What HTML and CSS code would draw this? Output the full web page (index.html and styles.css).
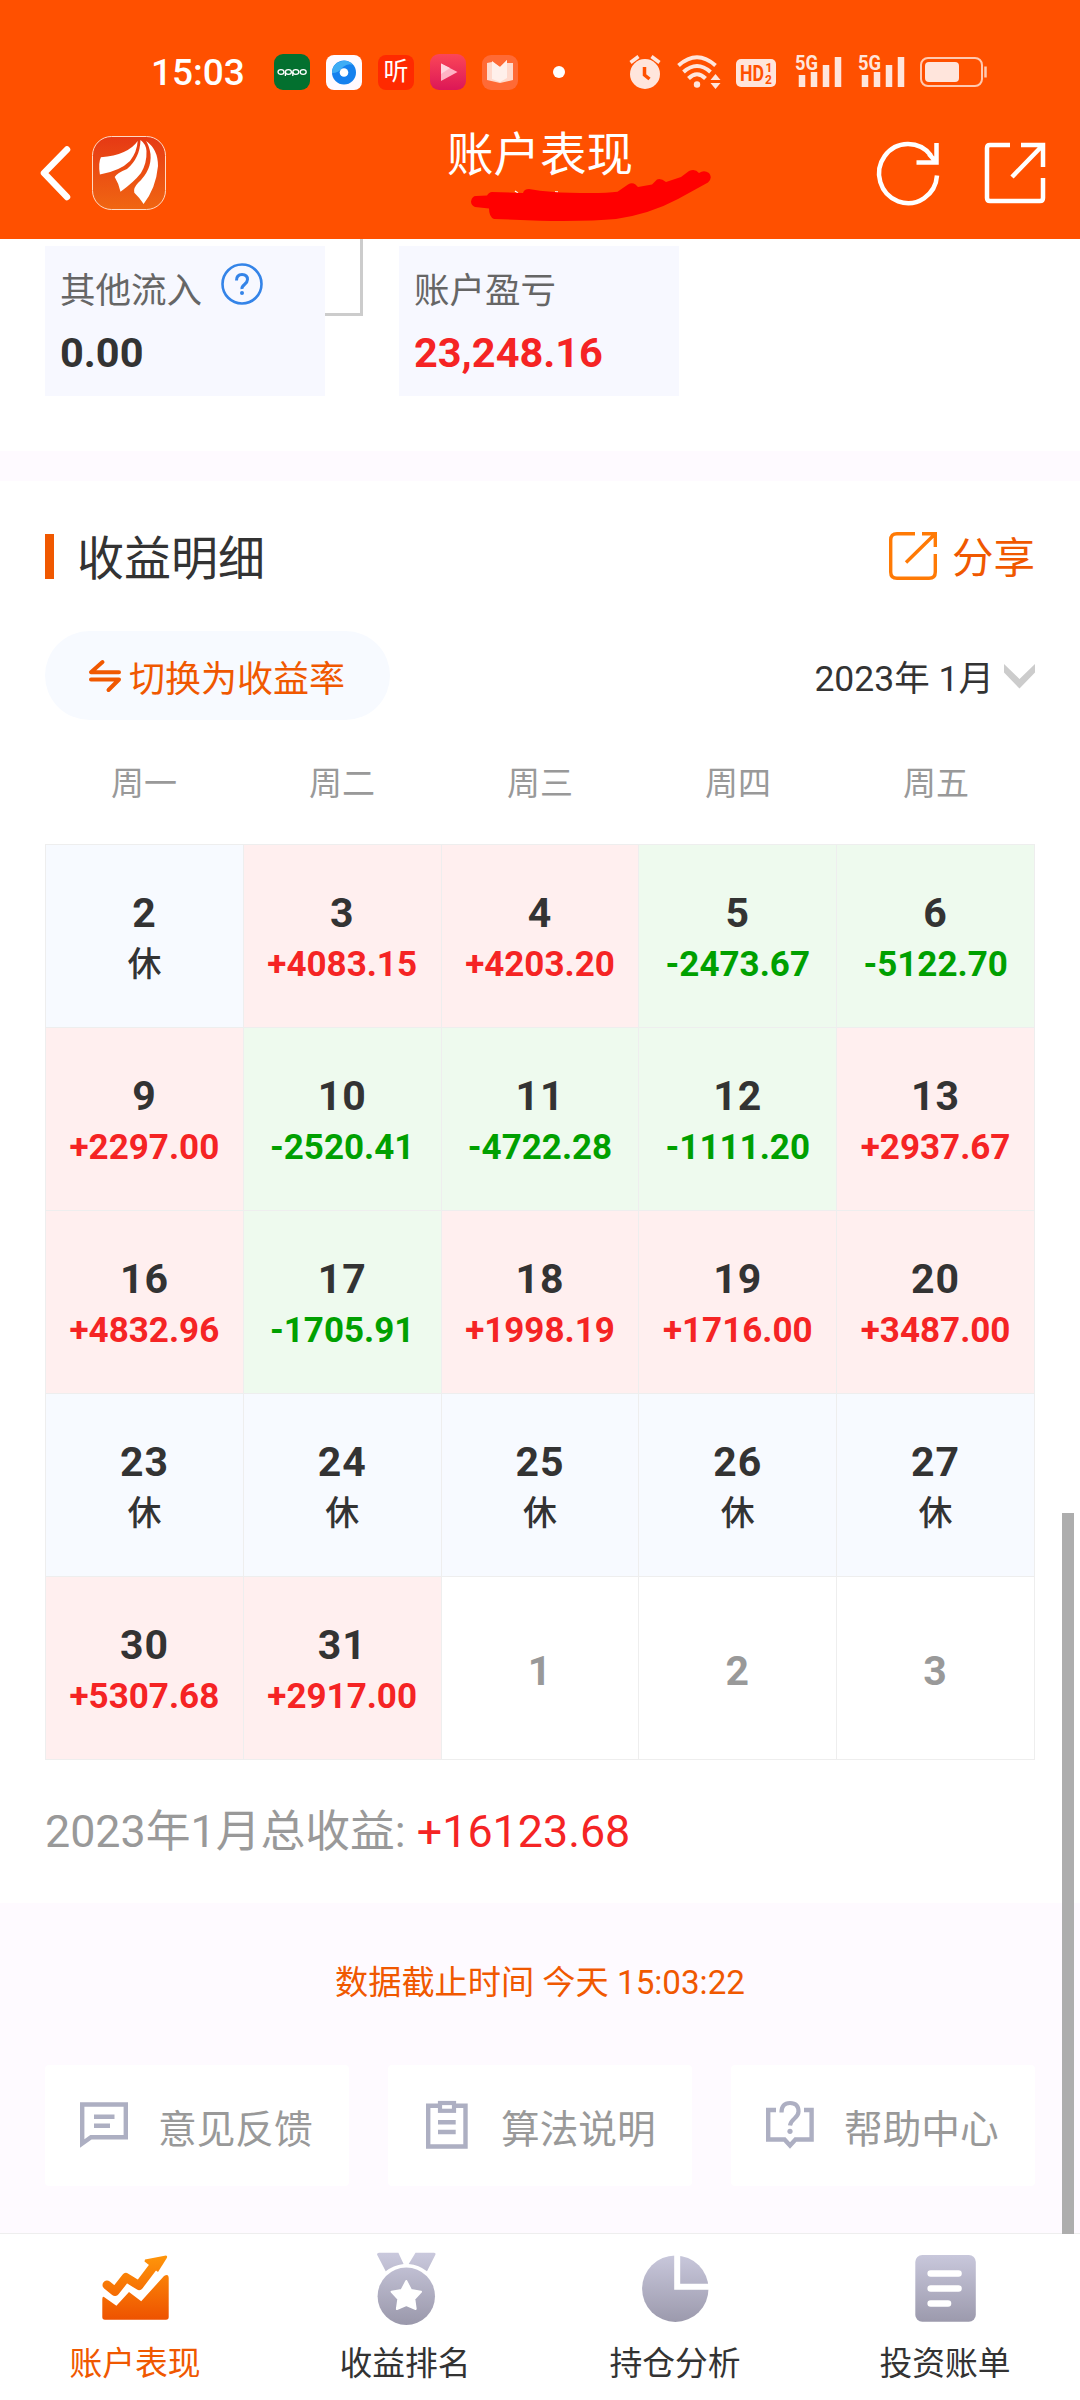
FILE: index.html
```html
<!DOCTYPE html>
<html lang="zh-CN">
<head>
    <meta charset="UTF-8">
    <meta name="viewport" content="width=device-width, initial-scale=1.0">
    <title>账户表现</title>
    <link rel="stylesheet" href="styles.css">
</head>
<body>

    <header class="header">
        <!-- Status bar -->
        <div class="status-bar">
            <span class="clock">15:03</span>
            <div class="app-icons">
                <svg width="36" height="36" viewBox="0 0 36 36">
                    <rect width="36" height="36" rx="9" fill="#03702f"/>
                    <g fill="none" stroke="#fff" stroke-width="1.3">
                        <ellipse cx="7" cy="18" rx="3" ry="2.3"/>
                        <ellipse cx="14.4" cy="18" rx="3" ry="2.3"/>
                        <ellipse cx="21.8" cy="18" rx="3" ry="2.3"/>
                        <ellipse cx="29.2" cy="18" rx="3" ry="2.3"/>
                        <path d="M11.4 18v4M18.8 18v4"/>
                    </g>
                </svg>
                <svg width="36" height="36" viewBox="0 0 36 36">
                    <rect y="1" width="36" height="35" rx="8" fill="#fffaff"/>
                    <circle cx="18" cy="18.500" r="12" fill="#1580ee"/>
                    <path d="M6 19A12 12 0 0 1 27 11Q22 9 17 13Q13 19 6 19z" fill="#3fadf5"/>
                    <circle cx="18" cy="18.500" r="4.300" fill="#fff"/>
                </svg>
                <span class="listen-icon">听</span>
                <svg width="36" height="36" viewBox="0 0 36 36">
                    <defs>
                        <linearGradient id="playBg" x1="0" y1="0" x2="0" y2="1">
                            <stop offset="0" stop-color="#fb4658"/>
                            <stop offset="1" stop-color="#dc1757"/>
                        </linearGradient>
                    </defs>
                    <rect width="36" height="36" rx="9" fill="url(#playBg)"/>
                    <path d="M11 9.500L27.500 18L11 27z" fill="#ffb3c4"/>
                    <path d="M11 9.500L20 14L11 20z" fill="#ffd5de"/>
                </svg>
                <svg width="36" height="36" viewBox="0 0 36 36">
                    <rect y="1" width="36" height="35" rx="9" fill="#ff6a35"/>
                    <path d="M5 9l5-1 8 5 7-7v3h6v17l-13 3-13-3z" fill="#ffd9cc"/>
                    <path d="M10 7l8 6 7-7v18l-7 4-8-3z" fill="#fff0eb"/>
                </svg>
            </div>
            <span class="dot"></span>
            <div class="system-icons">
                <svg class="alarm" width="32" height="36" viewBox="0 0 32 36">
                    <circle cx="16" cy="20" r="15" fill="#ffe5dc"/>
                    <path d="M1.500 8.500l8-6M22.500 2.500l8 6" stroke="#ffe5dc" stroke-width="3.500"/>
                    <path d="M15.500 13v8l5 4" fill="none" stroke="#ff5000" stroke-width="3.500"/>
                </svg>
                <svg class="wifi" width="44" height="36" viewBox="0 0 44 36">
                    <g fill="none" stroke="#ffe5dc" stroke-width="4">
                        <path d="M1.500 11.500Q20 -5 38.500 11.500"/>
                        <path d="M6.500 18Q20 6 33.500 18"/>
                        <path d="M11.500 24.500Q20 16 28.500 24.500"/>
                    </g>
                    <circle cx="20" cy="30.500" r="3.200" fill="#ffe5dc"/>
                    <path d="M33.500 26l5-6 5 6zM33.500 29l5 6 5-6z" fill="#ffe5dc"/>
                </svg>
                <svg class="hd" width="40" height="36" viewBox="0 0 40 36">
                    <rect y="5" width="40" height="28" rx="5" fill="#ffe5dc"/>
                    <text x="4" y="27" font-size="22" textLength="24" lengthAdjust="spacingAndGlyphs">HD</text>
                    <text x="29.500" y="18" font-size="12">1</text>
                    <text x="29" y="30" font-size="12">2</text>
                </svg>
                <svg class="signal" width="48" height="36" viewBox="0 0 48 36">
                    <text x="0" y="16" font-size="20" textLength="23" lengthAdjust="spacingAndGlyphs">5G</text>
                    <path d="M7 21v12M19 18v15M31 11v22M43 3v30" stroke="#ffe5dc" stroke-width="6.500"/>
                </svg>
                <svg class="signal" width="48" height="36" viewBox="0 0 48 36">
                    <text x="0" y="16" font-size="20" textLength="23" lengthAdjust="spacingAndGlyphs">5G</text>
                    <path d="M7 21v12M19 18v15M31 11v22M43 3v30" stroke="#ffe5dc" stroke-width="6.500"/>
                </svg>
                <svg class="battery" width="68" height="36" viewBox="0 0 68 36">
                    <rect x="1" y="4" width="61" height="28" rx="7" fill="none" stroke="#ffc9b0" stroke-width="2"/>
                    <rect x="5" y="8" width="34" height="20" rx="4" fill="#ffe5dc"/>
                    <path d="M65.500 12.500v11" stroke="#ffc9b0" stroke-width="2.500"/>
                </svg>
            </div>
        </div>

        <!-- Title bar -->
        <div class="title-bar">
            <div class="title-left">
                <svg width="30" height="56" viewBox="0 0 30 56">
                    <path d="M27 4.500L4 28l23 24" fill="none" stroke="#fff" stroke-width="6.500" stroke-linecap="round" stroke-linejoin="round"/>
                </svg>
                <svg width="74" height="74" viewBox="0 0 74 74">
                    <defs>
                        <linearGradient id="logoBg" x1="0" y1="0" x2="0" y2="1">
                            <stop offset="0" stop-color="#e63914"/>
                            <stop offset="1" stop-color="#f06612"/>
                        </linearGradient>
                    </defs>
                    <rect x=".5" y=".5" width="73" height="73" rx="19" fill="url(#logoBg)" stroke="#ffd9c2"/>
                    <g fill="#fff">
                        <path d="M45.700 5Q45 16 38 25Q28 35 7.900 38.500Q6 27 8.900 21.300Q36 19 45.700 5z"/>
                        <path d="M48.500 4Q54 8 54.500 15Q55 27 49 37Q42 46 28.500 55.700Q27 48 22.700 41Q25 37 35 33Q48 22 48.500 4z"/>
                        <path d="M54 5Q66 13 66 30Q64 52 51.600 68Q47 61 42.300 56.700Q41 52 46 47Q60 34 58.500 18Q57 9 54 5z"/>
                    </g>
                </svg>
            </div>
            <h1>账户表现</h1>
            <div class="title-right">
                <svg width="64" height="66" viewBox="0 0 64 66">
                    <path d="M60 34.500A29 29.500 0 1 1 54 14.500" transform="translate(0 1)" fill="none" stroke="#fff" stroke-width="4.500"/>
                    <path d="M59.500 3v19.500H39.500M59 22L52 14" fill="none" stroke="#fff" stroke-width="4.500"/>
                </svg>
                <svg width="62" height="62" viewBox="0 0 62 62">
                    <path d="M26 3H6Q3 3 3 6V56Q3 59 6 59H56Q59 59 59 56V36M37 3H59V25M58 4L28 35" fill="none" stroke="#fff" stroke-width="4.500"/>
                </svg>
            </div>
        </div>

        <!-- Marker stroke over the account name -->
        <svg class="marker" width="242" height="54" viewBox="470 168 242 54">
            <path d="M515 191l3 2M555 192h3" stroke="#fff" stroke-width="1.500"/>
            <path d="M540 190.700Q560 193 580 193Q605 193.500 617.500 191.700L628 184.500Q632 182 635.500 184.500L638 187L652 184.500L657 179.500Q661 178 666 182L681 177L689 171Q695 168 699 173Q704 169.500 709 173Q713 178 708 182.500L678 199Q650 214 616 219Q590 221.500 540 220.700L494 219Q489 217 489 208.500L475 207Q471 205 471 201.500Q472 196 476 196L487 195.600Q489 192 492 192L523 193Q524 189 529 189z" fill="#f00"/>
        </svg>
    </header>

    <main>
        <!-- Account summary, scrolled under the header -->
        <section class="summary">
            <div class="summary-card">
                <div class="summary-label">其他流入
                    <svg width="44" height="44" viewBox="0 0 44 44">
                        <circle cx="22" cy="22" r="19.500" fill="none" stroke="#3484e8" stroke-width="2.600"/>
                        <path d="M16.500 18.500Q16.500 12.500 22 12.500T27.500 17.500Q27.500 20 24.500 22.500T22 27" fill="none" stroke="#3484e8" stroke-width="3"/>
                        <circle cx="22" cy="31" r="2" fill="#3484e8"/>
                    </svg>
                </div>
                <div class="summary-value">0.00</div>
            </div>
            <div class="connector"></div>
            <div class="summary-card">
                <div class="summary-label">账户盈亏</div>
                <div class="summary-value up">23,248.16</div>
            </div>
        </section>

        <!-- Profit details -->
        <section class="details">
            <div class="details-head">
                <h2>收益明细</h2>
                <a class="share">
                    <svg width="48" height="48" viewBox="0 0 48 48">
                        <path d="M26 1.700H8Q1.700 1.700 1.700 8V40Q1.700 46.300 8 46.300H40Q46.300 46.300 46.300 40V22M33 1.700H46.300V15M45 3L17 30.500" fill="none" stroke="#ff7a05" stroke-width="3.400"/>
                    </svg>
                    <span>分享</span>
                </a>
            </div>
            <div class="toolbar">
                <div class="switch-button">
                    <svg width="32" height="32" viewBox="0 0 32 32">
                        <path d="M13.500 2L2 12.200H30M2 19.500H30L19.500 30" fill="none" stroke="#f05800" stroke-width="4" stroke-linecap="round" stroke-linejoin="round"/>
                    </svg>
                    <span>切换为收益率</span>
                </div>
                <div class="month">2023年 1月
                    <svg width="31" height="26" viewBox="0 0 31 26">
                        <path d="M0 1V9.500L15.500 25.500L31 9.500V1L15.500 16z" fill="#ccc"/>
                    </svg>
                </div>
            </div>
            <div class="weekdays">
                <span>周一</span><span>周二</span><span>周三</span><span>周四</span><span>周五</span>
            </div>
            <div class="calendar">
                <div class="day rest"><b>2</b><i>休</i></div>
                <div class="day gain"><b>3</b><i>+4083.15</i></div>
                <div class="day gain"><b>4</b><i>+4203.20</i></div>
                <div class="day loss"><b>5</b><i>-2473.67</i></div>
                <div class="day loss"><b>6</b><i>-5122.70</i></div>

                <div class="day gain"><b>9</b><i>+2297.00</i></div>
                <div class="day loss"><b>10</b><i>-2520.41</i></div>
                <div class="day loss"><b>11</b><i>-4722.28</i></div>
                <div class="day loss"><b>12</b><i>-1111.20</i></div>
                <div class="day gain"><b>13</b><i>+2937.67</i></div>

                <div class="day gain"><b>16</b><i>+4832.96</i></div>
                <div class="day loss"><b>17</b><i>-1705.91</i></div>
                <div class="day gain"><b>18</b><i>+1998.19</i></div>
                <div class="day gain"><b>19</b><i>+1716.00</i></div>
                <div class="day gain"><b>20</b><i>+3487.00</i></div>

                <div class="day rest"><b>23</b><i>休</i></div>
                <div class="day rest"><b>24</b><i>休</i></div>
                <div class="day rest"><b>25</b><i>休</i></div>
                <div class="day rest"><b>26</b><i>休</i></div>
                <div class="day rest"><b>27</b><i>休</i></div>

                <div class="day gain"><b>30</b><i>+5307.68</i></div>
                <div class="day gain"><b>31</b><i>+2917.00</i></div>
                <div class="day next"><b>1</b></div>
                <div class="day next"><b>2</b></div>
                <div class="day next"><b>3</b></div>
            </div>
            <div class="total">2023年1月总收益: <span class="up">+16123.68</span></div>
        </section>

        <!-- Help links -->
        <section class="help">
            <div class="updated">数据截止时间 今天 15:03:22</div>
            <div class="help-cards">
                <div class="help-card">
                    <svg width="48" height="48" viewBox="0 0 48 48">
                        <path d="M2.200 3.500H45.800V36.200H11L2.200 42.500zM14 15.700H34.500M14 24.700H30" fill="none" stroke="#adafc2" stroke-width="4.400"/>
                    </svg>
                    意见反馈
                </div>
                <div class="help-card">
                    <svg width="48" height="48" viewBox="0 0 48 48">
                        <path d="M15 4.700H5.200V45.500H42.500V4.700H33M15 21.300H32.700M15 31H32.700" fill="none" stroke="#adafc2" stroke-width="4.400"/>
                        <rect x="17" y="2" width="14" height="7.800" fill="none" stroke="#adafc2" stroke-width="4.200"/>
                    </svg>
                    算法说明
                </div>
                <div class="help-card">
                    <svg width="48" height="48" viewBox="0 0 48 48">
                        <path d="M10 9H2.200V38.500H18.500L24 44.500L29.500 38.500H45.600V9H38" fill="none" stroke="#adafc2" stroke-width="4.400"/>
                        <path d="M15.500 11.500Q15.500 2 24 2T32.500 10.500Q32.500 14 28.500 17.500T24 24.500" fill="none" stroke="#adafc2" stroke-width="4.200"/>
                        <circle cx="24" cy="30.300" r="2.600" fill="#adafc2"/>
                    </svg>
                    帮助中心
                </div>
            </div>
        </section>
    </main>

    <div class="scrollbar"></div>

    <!-- Bottom tabs -->
    <nav class="tabs">
        <div class="tab active">
            <svg width="72" height="76" viewBox="0 0 72 76">
                <defs>
                    <linearGradient id="orange" gradientUnits="userSpaceOnUse" x1="0" y1="6" x2="0" y2="71">
                        <stop offset="0" stop-color="#ff960a"/>
                        <stop offset="1" stop-color="#ee5200"/>
                    </linearGradient>
                    <linearGradient id="grey" gradientUnits="userSpaceOnUse" x1="0" y1="5" x2="0" y2="74">
                        <stop offset="0" stop-color="#c9c8dc"/>
                        <stop offset="1" stop-color="#9b99ac"/>
                    </linearGradient>
                </defs>
                <path d="M8 36L16 42.500L27 28.500L40 36.500L57 14" fill="none" stroke="url(#orange)" stroke-width="9" stroke-linecap="round" stroke-linejoin="round"/>
                <path d="M46 10.500L67 6.500Q69 7 67.500 9.500L59 23L45.500 12.500z" fill="url(#orange)"/>
                <path d="M5 48L17.400 56.700L30 43L42.200 52.300L65 27Q69.500 24 69.700 29V68Q69.700 70.700 67 70.700H6Q3.300 70.700 3.300 68V50Q3.500 47 5 48z" fill="url(#orange)"/>
            </svg>
            <span>账户表现</span>
        </div>
        <div class="tab">
            <svg width="72" height="76" viewBox="0 0 72 76">
                <path d="M10 3.700H29.400L34.600 15Q24 16.500 16.700 22.300L8 5.500Q8 3.700 10 3.700zM46.500 3.700H65Q67 4 66.500 5.500L58 22.300Q50 16 39.700 15z" fill="url(#grey)"/>
                <circle cx="37.300" cy="47.300" r="28.700" fill="url(#grey)"/>
                <path d="M37.300 32L42 41L52 42.800L45.300 50L46.700 60L37.300 56L27.900 60L29.300 50L22.600 42.800L32.600 41z" fill="#fff" stroke="#fff" stroke-width="2" stroke-linejoin="round"/>
            </svg>
            <span>收益排名</span>
        </div>
        <div class="tab">
            <svg width="72" height="76" viewBox="0 0 72 76">
                <circle cx="36.300" cy="39.700" r="33.200" fill="url(#grey)"/>
                <path d="M38.200 0V37.800H72" fill="none" stroke="#fff" stroke-width="6"/>
            </svg>
            <span>持仓分析</span>
        </div>
        <div class="tab">
            <svg width="72" height="76" viewBox="0 0 72 76">
                <rect x="6.300" y="6" width="60.500" height="66.700" rx="7" fill="url(#grey)"/>
                <path d="M21.700 24.500H49.500M21.700 39.500H49.500M21.700 54.500H39" stroke="#fff" stroke-width="6.600" stroke-linecap="round"/>
            </svg>
            <span>投资账单</span>
        </div>
    </nav>

</body>
</html>
```
FILE: styles.css
```css
* {
    box-sizing: border-box;
}
body {
    margin: 0;
    width: 1080px;
    height: 2400px;
    position: relative;
    overflow: hidden;
    background-color: #fff;
    font-family: Roboto, 'Noto Sans CJK SC', sans-serif;
    color: #333;
}
svg {
    display: block;
    flex-shrink: 0;
    overflow: visible;
}
h1, h2 {
    margin: 0;
    font-weight: 400;
}

/* Header */
.header {
    position: relative;
    height: 239px;
    background-color: #ff5000;
    color: #fff;
}
.status-bar {
    display: flex;
    align-items: center;
    height: 104px;
    padding: 40px 0 0 151px;
}
.clock {
    width: 123px;
    padding-top: 2px;
    font-size: 37px;
    font-weight: 500;
    line-height: 62px;
}
.app-icons {
    display: flex;
    gap: 16px;
}
.listen-icon {
    width: 36px;
    height: 35px;
    margin-top: 1px;
    border-radius: 8px;
    background-color: #ff2a00;
    font-size: 25px;
    line-height: 34px;
    text-align: center;
}
.dot {
    width: 12px;
    height: 12px;
    margin: 0 64px 0 35px;
    border-radius: 50%;
    background-color: #fff;
}
.system-icons {
    display: flex;
}
.system-icons text {
    font-family: Roboto, sans-serif;
    font-weight: 700;
}
.hd text {
    fill: #ff5000;
}
.signal text {
    fill: #ffe5dc;
}
.wifi {
    margin-left: 16px;
}
.hd {
    margin-left: 15px;
}
.signal {
    margin-left: 19px;
}
.signal + .signal {
    margin-left: 15px;
}
.battery {
    margin-left: 14px;
}
.title-bar {
    display: grid;
    grid-template-columns: 1fr auto 1fr;
    align-items: center;
    height: 138px;
    padding: 0 34px 0 40px;
}
.title-left, .title-right {
    display: flex;
    align-items: center;
}
.title-left {
    gap: 22px;
}
.title-right {
    justify-content: flex-end;
    gap: 43px;
}
.title-bar h1 {
    padding: 0 6px 36px 0;
    font-size: 46.5px;
    line-height: 60px;
}
.marker {
    position: absolute;
    left: 470px;
    top: 168px;
}

/* Summary */
.summary {
    display: flex;
    height: 212px;
    padding: 0 45px;
}
.summary-card {
    width: 280px;
    height: 150px;
    margin-top: 7px;
    padding: 14px 15px 0;
    background-color: #f7f8ff;
}
.summary-label {
    display: flex;
    align-items: center;
    gap: 18px;
    height: 54px;
    font-size: 35.5px;
    color: #666;
}
.summary-label svg {
    margin-top: -6px;
}
.summary-value {
    padding-top: 4px;
    font-size: 41.5px;
    font-weight: 700;
    line-height: 70px;
}
.connector {
    width: 38px;
    height: 77px;
    margin-right: 36px;
    border: solid #ccc;
    border-width: 0 3px 3px 0;
}
.up {
    color: #f52424;
}

/* Details */
.details {
    height: 1452px;
    border-top: 30px solid #fefaff;
    padding: 42px 45px 0;
}
.details-head, .toolbar {
    display: flex;
    align-items: center;
    justify-content: space-between;
}
.details-head {
    height: 68px;
}
.details-head h2 {
    display: flex;
    align-items: center;
    gap: 23px;
    padding-top: 3px;
    font-size: 47px;
    line-height: 68px;
}
.details-head h2::before {
    content: '';
    width: 9px;
    height: 45px;
    margin-top: -4px;
    background-color: #f05800;
}
.share {
    display: flex;
    align-items: center;
    gap: 15px;
    font-size: 41.5px;
    line-height: 68px;
    color: #f05800;
}
.share svg {
    margin-top: -2px;
}
.share span {
    padding-top: 4px;
}
.toolbar {
    height: 89px;
    margin-top: 40px;
}
.switch-button {
    display: flex;
    align-items: center;
    gap: 8px;
    width: 345px;
    height: 89px;
    padding-left: 44px;
    border-radius: 45px;
    background-color: #f7faff;
    font-size: 36px;
    color: #f05800;
}
.month {
    display: flex;
    align-items: center;
    gap: 10px;
    font-size: 35.5px;
}
.weekdays {
    display: grid;
    grid-template-columns: repeat(5, 1fr);
    height: 124px;
    padding-top: 2px;
    line-height: 124px;
    font-size: 33px;
    text-align: center;
    color: #999;
}
.calendar {
    display: grid;
    grid-template-columns: repeat(5, 1fr);
    grid-auto-rows: 183px;
    border-right: 1px solid #eee;
}
.day {
    display: flex;
    flex-direction: column;
    align-items: center;
    justify-content: center;
    padding-top: 5px;
    border: solid #eee;
    border-width: 1px 0 0 1px;
}
.day b {
    font-size: 41px;
    line-height: 52px;
    letter-spacing: 1px;
}
.day i {
    font-size: 35px;
    font-style: normal;
    font-weight: 700;
    line-height: 51px;
}
.gain {
    background-color: #ffefef;
}
.gain i {
    color: #f52424;
}
.loss {
    background-color: #eefaee;
}
.loss i {
    color: #00a000;
}
.rest {
    background-color: #f7faff;
}
.rest i {
    font-size: 34px;
    font-weight: 500;
}
.next b {
    color: #999;
}
.total {
    border-top: 1px solid #eee;
    font-size: 44.8px;
    line-height: 143px;
    color: #999;
}

/* Help */
.help {
    height: 330px;
    padding: 50px 45px 0;
    background-color: #fefaff;
}
.updated {
    font-size: 33.2px;
    line-height: 60px;
    text-align: center;
    color: #f05800;
}
.help-cards {
    display: grid;
    grid-template-columns: repeat(3, 304px);
    justify-content: space-between;
    margin-top: 52px;
}
.help-card {
    display: flex;
    align-items: center;
    gap: 30px;
    height: 121px;
    padding-left: 35px;
    border-radius: 4px;
    background-color: #fff;
    font-size: 38.7px;
    color: #999;
}
.help-card svg {
    margin-top: -2px;
}
.scrollbar {
    position: absolute;
    left: 1062px;
    top: 1513px;
    width: 12px;
    height: 721px;
    background-color: #adadad;
}

/* Bottom tabs */
.tabs {
    display: grid;
    grid-template-columns: repeat(4, 1fr);
    height: 166px;
    border-top: 1px solid #eee;
}
.tab {
    display: flex;
    flex-direction: column;
    align-items: center;
    padding-top: 15px;
}
.tab span {
    margin-top: 15px;
    font-size: 32.800px;
    line-height: 48px;
}
.tab.active {
    color: #f05800;
}
```
